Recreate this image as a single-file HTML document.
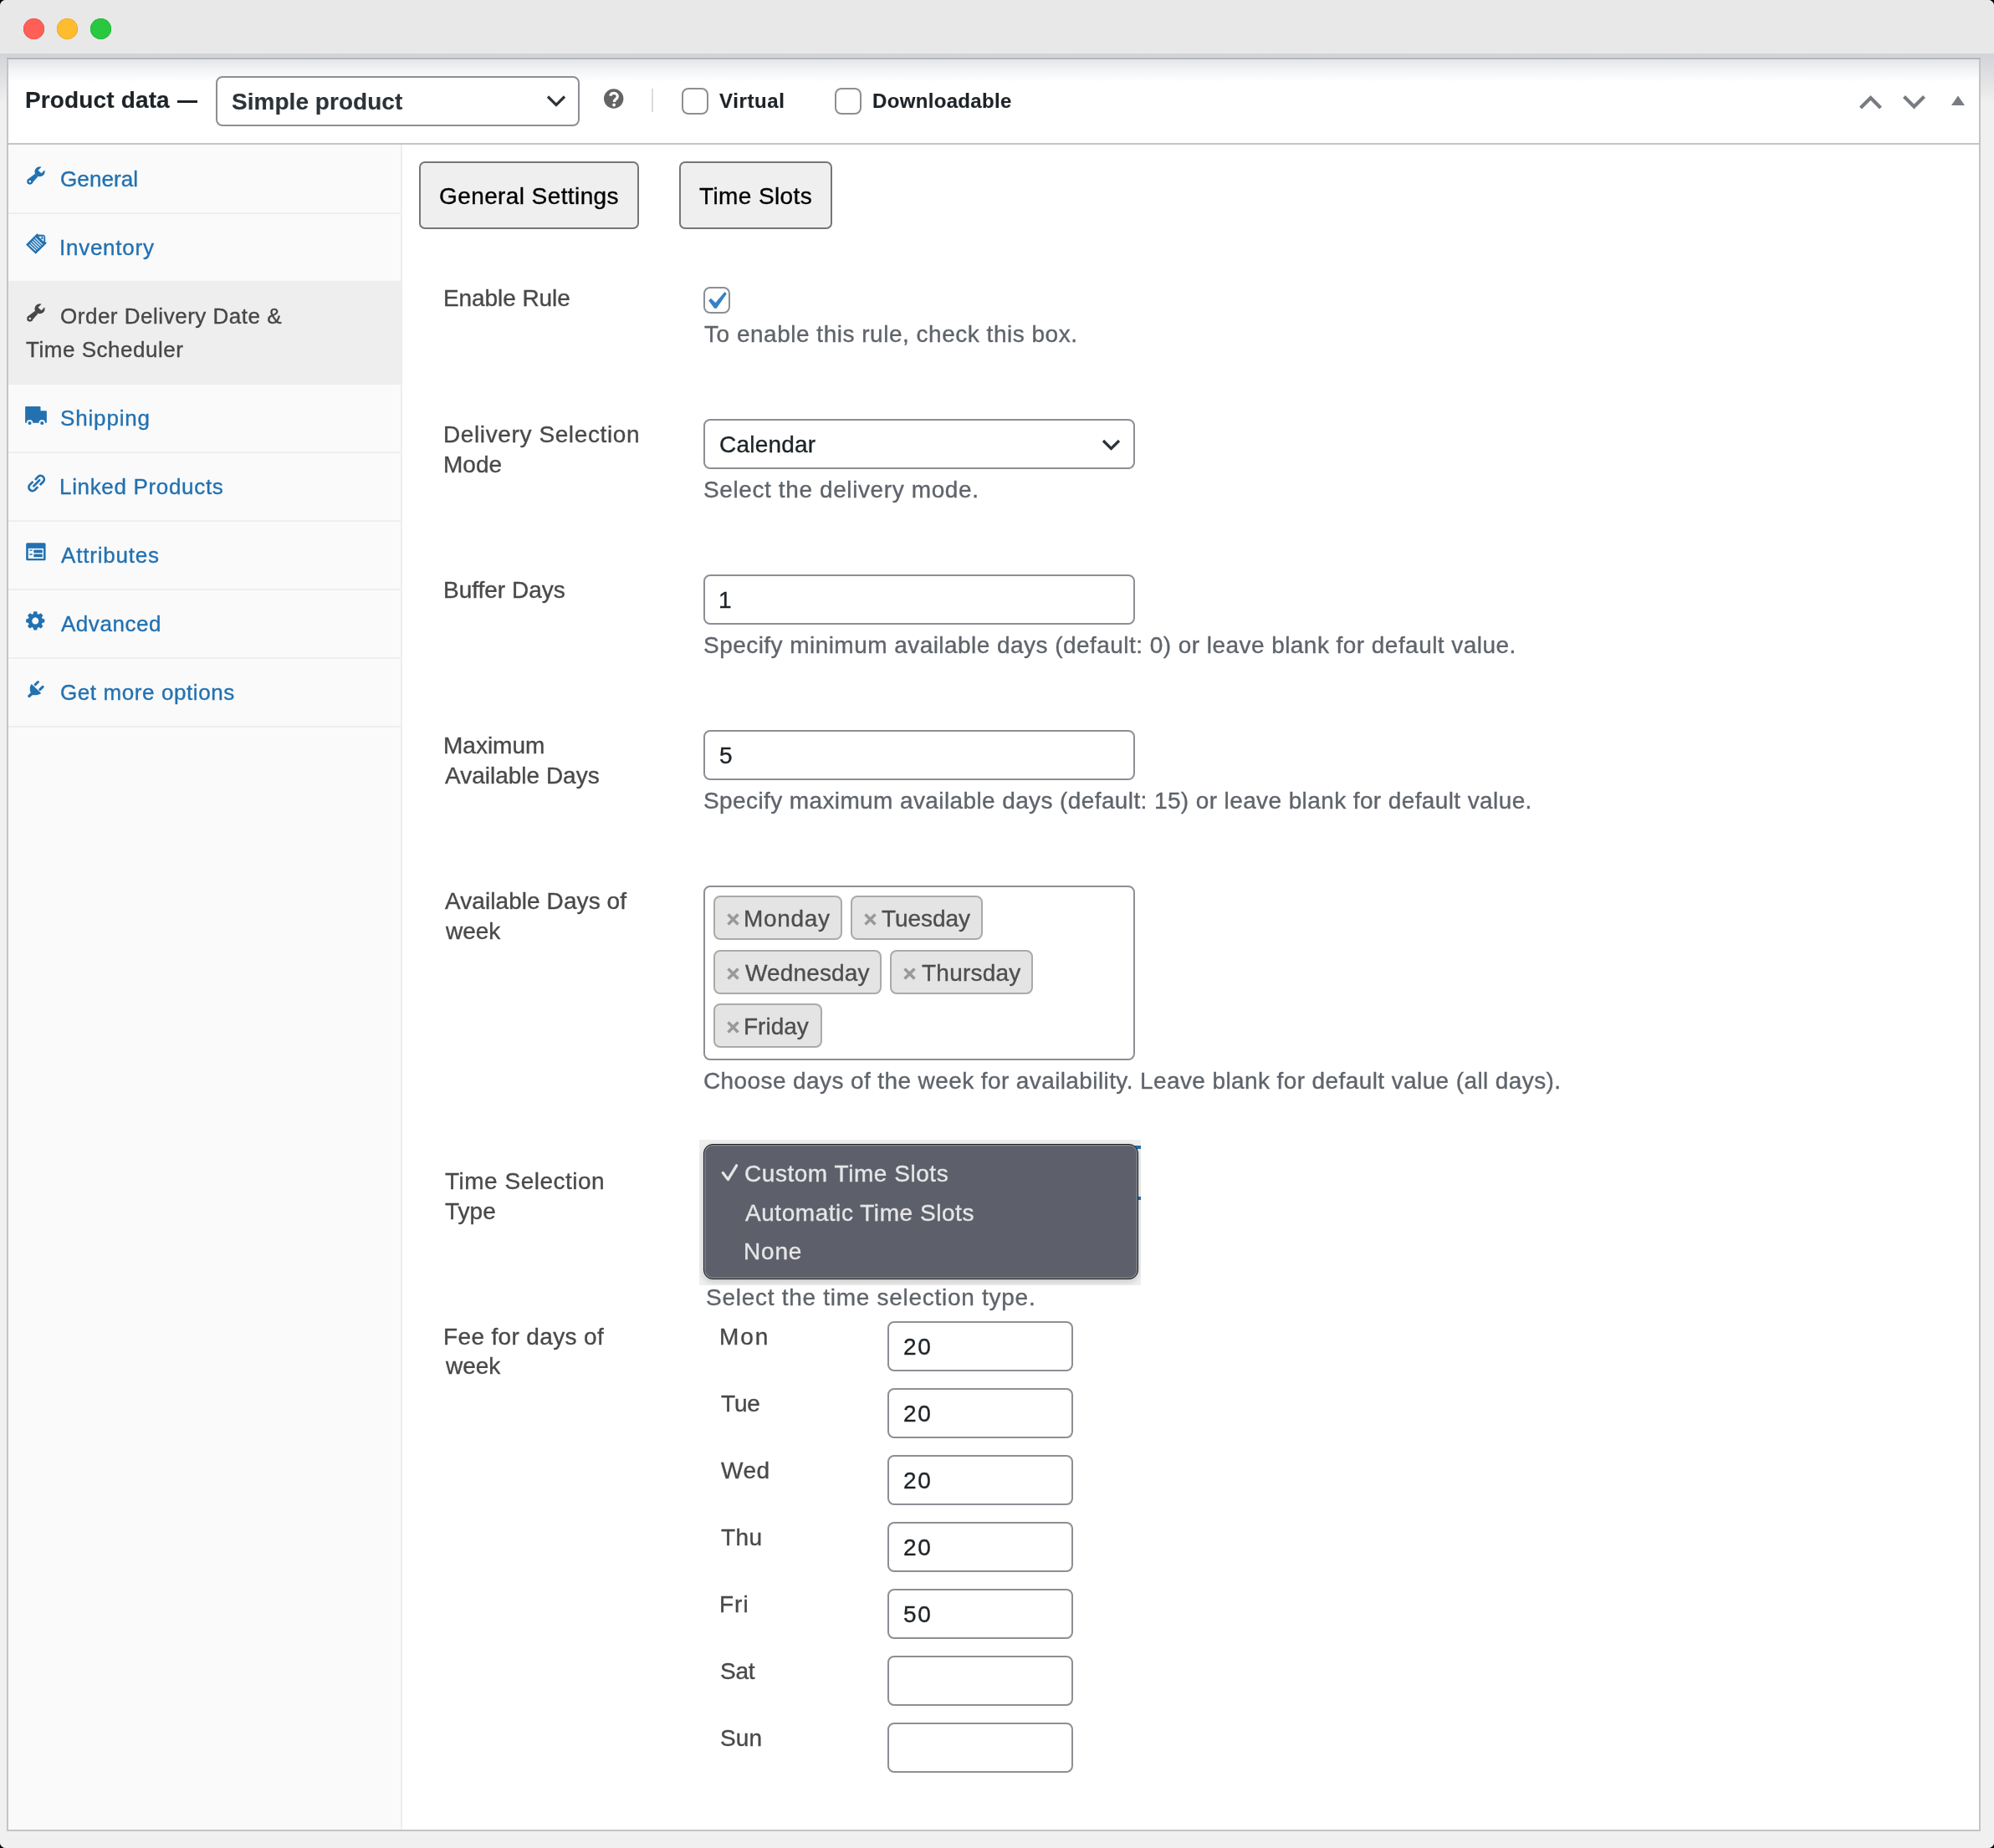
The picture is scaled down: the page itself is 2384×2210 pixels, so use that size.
<!DOCTYPE html>
<html><head><meta charset="utf-8"><style>
html,body{margin:0;padding:0;}
body{width:2384px;height:2210px;overflow:hidden;background:#000;position:relative;font-family:'Liberation Sans', sans-serif;}
#w{position:absolute;left:0;top:0;width:2384px;height:2210px;border-radius:7px;overflow:hidden;background:#f0f0f1;}
#w>div,#w>svg{position:absolute;}
#w>div{will-change:transform;}
</style></head><body><div id="w">
<div style="left:0px;top:0px;width:2384px;height:64px;background:#e8e8e8"></div>
<div style="left:27.5px;top:21.8px;width:25.3px;height:25.3px;background:#ff5f57;border-radius:50%;box-shadow:inset 0 0 0 0.6px #e2463f"></div>
<div style="left:67.5px;top:21.8px;width:25.3px;height:25.3px;background:#febc2e;border-radius:50%;box-shadow:inset 0 0 0 0.6px #e1a116"></div>
<div style="left:107.5px;top:21.8px;width:25.3px;height:25.3px;background:#28c840;border-radius:50%;box-shadow:inset 0 0 0 0.6px #14ae2b"></div>
<div style="left:0px;top:64px;width:2384px;height:2146px;background:#f0f0f1"></div>
<div style="left:0px;top:64px;width:2384px;height:7px;background:linear-gradient(#d2d3d7,#d4d5d9)"></div>
<div style="left:0px;top:64px;width:8px;height:60px;background:linear-gradient(#d2d3d7,#f0f0f1)"></div>
<div style="left:2368px;top:64px;width:16px;height:60px;background:linear-gradient(#d2d3d7,#f0f0f1)"></div>
<div style="left:8px;top:69px;width:2360px;height:2121px;background:#fff;border:2px solid #c3c4c7;box-sizing:border-box"></div>
<div style="left:8px;top:69px;width:2360px;height:2px;background:#b4b6bb"></div>
<div style="left:10px;top:71px;width:2356px;height:27px;background:linear-gradient(#e3e4e7,#f2f3f4 45%,#ffffff)"></div>
<div style="left:10px;top:171px;width:2356px;height:2px;background:#c3c4c7"></div>
<div style="left:10px;top:173px;width:471px;height:2015px;background:#fafafa"></div>
<div style="left:479px;top:173px;width:2px;height:2015px;background:#eee"></div>
<div style="left:10px;top:254px;width:469px;height:2px;background:#eee"></div>
<div style="left:10px;top:336px;width:469px;height:2px;background:#eee"></div>
<div style="left:10px;top:458px;width:469px;height:2px;background:#eee"></div>
<div style="left:10px;top:540px;width:469px;height:2px;background:#eee"></div>
<div style="left:10px;top:622px;width:469px;height:2px;background:#eee"></div>
<div style="left:10px;top:704px;width:469px;height:2px;background:#eee"></div>
<div style="left:10px;top:786px;width:469px;height:2px;background:#eee"></div>
<div style="left:10px;top:868px;width:469px;height:2px;background:#eee"></div>
<div style="left:10px;top:336px;width:471px;height:124px;background:#eee"></div>
<div style="left:212px;top:119.6px;width:23.5px;height:2.8px;background:#1d2327"></div>
<div style="left:258px;top:91px;width:435px;height:60px;border:2px solid #8c8f94;border-radius:8px;box-sizing:border-box;background:#fff"></div>
<svg style="left:652px;top:112px" width="26" height="18" viewBox="0 0 26 18"><path d="M3 3.5 L13 13.5 L23 3.5" fill="none" stroke="#2c3338" stroke-width="3.2"/></svg>
<svg style="left:721px;top:106px" width="26" height="26" viewBox="0 0 26 26"><circle cx="12.7" cy="12" r="11.7" fill="#646464"/><path d="M8.6 8.6 C9.3 6.2 11.3 5.4 13 5.4 C15.6 5.4 17.3 7.2 17.3 9.3 C17.3 11.6 15.3 12.4 14.2 13.6 C13.6 14.3 13.4 15 13.4 16" fill="none" stroke="#fff" stroke-width="3.2"/><circle cx="13.1" cy="19.5" r="1.9" fill="#fff"/></svg>
<div style="left:779px;top:106px;width:2px;height:28px;background:#dcdcde"></div>
<div style="left:815px;top:105px;width:32px;height:32px;border:2px solid #8c8f94;border-radius:8px;box-sizing:border-box;background:#fff"></div>
<div style="left:998px;top:105px;width:32px;height:32px;border:2px solid #8c8f94;border-radius:8px;box-sizing:border-box;background:#fff"></div>
<svg style="left:2218px;top:108px" width="140" height="28" viewBox="0 0 140 28"><path d="M6.5 21 L18.5 9 L30.5 21" fill="none" stroke="#787c82" stroke-width="4.2"/><path d="M58.5 7.5 L70.5 19.5 L82.5 7.5" fill="none" stroke="#787c82" stroke-width="4.2"/><path d="M115 18 L123 6.5 L131 18 Z" fill="#787c82"/></svg>
<svg style="left:26px;top:190px" width="40" height="40" viewBox="0 0 1848 1848"><g fill="#2271b1"><circle cx="995" cy="705" r="280"/><path d="M735 815 L900 965 L555 1360 L330 1135 Z"/><circle cx="450" cy="1250" r="165"/></g><path d="M1060 470 L905 640 L1085 800 L1245 640 L1500 380 L1320 200 Z" fill="#fafafa"/><circle cx="455" cy="1250" r="60" fill="#fafafa"/></svg>
<svg style="left:26px;top:354px" width="40" height="40" viewBox="0 0 1848 1848"><g fill="#474747"><circle cx="995" cy="705" r="280"/><path d="M735 815 L900 965 L555 1360 L330 1135 Z"/><circle cx="450" cy="1250" r="165"/></g><path d="M1060 470 L905 640 L1085 800 L1245 640 L1500 380 L1320 200 Z" fill="#eeeeee"/><circle cx="455" cy="1250" r="60" fill="#eeeeee"/></svg>
<svg style="left:26px;top:272px" width="40" height="40" viewBox="0 0 1848 1848"><g fill="#2271b1"><path d="M850 330 L1380 870 L770 1470 L230 950 Z"/><path d="M930 395 L1195 410 Q1290 430 1300 520 L1305 760 L1100 800 L860 470 Z"/></g><path d="M925 500 L1228 497 L1205 790 Z" fill="#fafafa"/><circle cx="1130" cy="585" r="60" fill="#2271b1"/><g stroke="#fafafa" stroke-width="52" stroke-linecap="butt"><path d="M410 940.0 L780 1290"/><path d="M495 847.5 L870 1205"/><path d="M580 755.0 L960 1120"/><path d="M665 662.5 L1050 1035"/><path d="M750 570.0 L1140 950"/></g></svg>
<svg style="left:26px;top:480px" width="40" height="40" viewBox="0 0 1848 1848"><path d="M190 320 Q190 280 230 280 L1000 280 Q1040 280 1040 320 L1040 520 L1340 520 Q1380 520 1380 560 L1380 1150 Q1380 1190 1340 1190 L1290 1190 A170 170 0 0 0 950 1190 L610 1190 A170 170 0 0 0 270 1190 L230 1190 Q190 1190 190 1150 Z" fill="#2271b1"/><circle cx="440" cy="1200" r="95" fill="#2271b1"/><circle cx="1120" cy="1200" r="95" fill="#2271b1"/></svg>
<svg style="left:26px;top:560px" width="40" height="40" viewBox="0 0 1848 1848"><g fill="none" stroke="#2271b1" stroke-width="125"><path d="M740 640 L909 459 A200 200 0 0 1 1191 741 L1005 925"/><path d="M890 1020 L721 1201 A200 200 0 0 1 439 919 L625 735"/><path d="M660 985 L980 655" stroke-linecap="round"/></g></svg>
<svg style="left:26px;top:642px" width="40" height="40" viewBox="0 0 1848 1848"><rect x="240" y="340" width="1080" height="970" rx="70" fill="#2271b1"/><rect x="360" y="640" width="840" height="560" fill="#fafafa"/><rect x="420" y="700" width="170" height="80" rx="25" fill="#2271b1" opacity="0.75"/><rect x="420" y="935" width="170" height="75" rx="25" fill="#2271b1"/><rect x="880" y="880" width="260" height="0" fill="#2271b1"/><rect x="660" y="715" width="485" height="165" rx="40" fill="#2271b1"/><rect x="660" y="960" width="485" height="165" rx="40" fill="#2271b1"/><rect x="660" y="880" width="485" height="80" fill="#2271b1" opacity="0.25"/></svg>
<svg style="left:26px;top:724px" width="40" height="40" viewBox="0 0 1848 1848"><path d="M632 468 L662 337 L838 337 L868 468 L937 496 L1050 425 L1175 550 L1104 663 L1132 732 L1263 762 L1263 938 L1132 968 L1104 1037 L1175 1150 L1050 1275 L937 1204 L868 1232 L838 1363 L662 1363 L632 1232 L563 1204 L450 1275 L325 1150 L396 1037 L368 968 L237 938 L237 762 L368 732 L396 663 L325 550 L450 425 L563 496Z M935 850 A185 185 0 1 0 935 851 Z" fill="#2271b1" fill-rule="evenodd"/></svg>
<svg style="left:26px;top:806px" width="40" height="40" viewBox="0 0 1848 1848"><path d="M540 560 L1070 1060 Q930 1190 570 1165 Q440 1000 450 760 Q470 640 540 560 Z" fill="#2271b1"/><path d="M520 1120 L410 1220" stroke="#2271b1" stroke-width="160" stroke-linecap="round"/><path d="M745 590 L900 440" stroke="#2271b1" stroke-width="140" stroke-linecap="round"/><path d="M1005 860 L1160 710" stroke="#2271b1" stroke-width="140" stroke-linecap="round"/></svg>
<div style="left:501px;top:193px;width:263px;height:81px;background:#efefef;border:2px solid #767676;border-radius:7px;box-sizing:border-box"></div>
<div style="left:812px;top:193px;width:183px;height:81px;background:#efefef;border:2px solid #767676;border-radius:7px;box-sizing:border-box"></div>
<div style="left:841px;top:343px;width:32px;height:32px;border:2px solid #8c8f94;border-radius:8px;box-sizing:border-box;background:#fff"></div>
<svg style="left:836px;top:338px" width="44" height="44" viewBox="0 0 1848 1848"><path d="M470 900 L580 790 L815 1010 L1280 460 L1380 560 L870 1290 L760 1290 Z" fill="#3582c4"/></svg>
<div style="left:841px;top:501px;width:516px;height:60px;border:2px solid #8c8f94;border-radius:8px;box-sizing:border-box;background:#fff"></div>
<svg style="left:1315px;top:522px" width="28" height="20" viewBox="0 0 28 20"><path d="M4 5 L13.5 14.5 L23 5" fill="none" stroke="#2c3338" stroke-width="3.2"/></svg>
<div style="left:841px;top:687px;width:516px;height:60px;border:2px solid #8c8f94;border-radius:8px;box-sizing:border-box;background:#fff"></div>
<div style="left:841px;top:873px;width:516px;height:60px;border:2px solid #8c8f94;border-radius:8px;box-sizing:border-box;background:#fff"></div>
<div style="left:841px;top:1059px;width:516px;height:209px;border:2px solid #8c8f94;border-radius:8px;box-sizing:border-box;background:#fff"></div>
<div style="left:853px;top:1071px;width:154px;height:53px;background:#e4e4e4;border:2px solid #aaa;border-radius:8px;box-sizing:border-box"></div>
<svg style="left:869px;top:1092px" width="15" height="15" viewBox="0 0 15 15"><path d="M1.5 1.5 L13.5 13.5 M13.5 1.5 L1.5 13.5" stroke="#999" stroke-width="3.5"/></svg>
<div style="left:1017px;top:1071px;width:158px;height:53px;background:#e4e4e4;border:2px solid #aaa;border-radius:8px;box-sizing:border-box"></div>
<svg style="left:1033px;top:1092px" width="15" height="15" viewBox="0 0 15 15"><path d="M1.5 1.5 L13.5 13.5 M13.5 1.5 L1.5 13.5" stroke="#999" stroke-width="3.5"/></svg>
<div style="left:853px;top:1136px;width:201px;height:53px;background:#e4e4e4;border:2px solid #aaa;border-radius:8px;box-sizing:border-box"></div>
<svg style="left:869px;top:1157px" width="15" height="15" viewBox="0 0 15 15"><path d="M1.5 1.5 L13.5 13.5 M13.5 1.5 L1.5 13.5" stroke="#999" stroke-width="3.5"/></svg>
<div style="left:1064px;top:1136px;width:171px;height:53px;background:#e4e4e4;border:2px solid #aaa;border-radius:8px;box-sizing:border-box"></div>
<svg style="left:1080px;top:1157px" width="15" height="15" viewBox="0 0 15 15"><path d="M1.5 1.5 L13.5 13.5 M13.5 1.5 L1.5 13.5" stroke="#999" stroke-width="3.5"/></svg>
<div style="left:853px;top:1200px;width:130px;height:53px;background:#e4e4e4;border:2px solid #aaa;border-radius:8px;box-sizing:border-box"></div>
<svg style="left:869px;top:1221px" width="15" height="15" viewBox="0 0 15 15"><path d="M1.5 1.5 L13.5 13.5 M13.5 1.5 L1.5 13.5" stroke="#999" stroke-width="3.5"/></svg>
<div style="left:836px;top:1363px;width:528px;height:174px;overflow:hidden;background:#efefef"><div style="position:absolute;left:514px;top:7px;width:14px;height:4px;background:#2271b1"></div><div style="position:absolute;left:524px;top:68px;width:4px;height:4px;background:#2271b1"></div><div style="position:absolute;left:5px;top:5px;width:520px;height:162px;background:#5d606a;border:1.5px solid #1f2023;border-radius:11px;box-sizing:border-box;box-shadow:inset 0 0 0 1.5px #80838b,0 3px 7px rgba(0,0,0,0.16)"></div></div>
<svg style="left:860px;top:1390px" width="24" height="24" viewBox="0 0 24 24"><path d="M4.3 12.5 L10.4 20.6 L20.6 3.8" fill="none" stroke="#e6e6e8" stroke-width="3.2" stroke-linecap="round" stroke-linejoin="round"/></svg>
<div style="left:1061px;top:1580px;width:222px;height:60px;border:2px solid #8c8f94;border-radius:8px;box-sizing:border-box;background:#fff"></div>
<div style="left:1061px;top:1660px;width:222px;height:60px;border:2px solid #8c8f94;border-radius:8px;box-sizing:border-box;background:#fff"></div>
<div style="left:1061px;top:1740px;width:222px;height:60px;border:2px solid #8c8f94;border-radius:8px;box-sizing:border-box;background:#fff"></div>
<div style="left:1061px;top:1820px;width:222px;height:60px;border:2px solid #8c8f94;border-radius:8px;box-sizing:border-box;background:#fff"></div>
<div style="left:1061px;top:1900px;width:222px;height:60px;border:2px solid #8c8f94;border-radius:8px;box-sizing:border-box;background:#fff"></div>
<div style="left:1061px;top:1980px;width:222px;height:60px;border:2px solid #8c8f94;border-radius:8px;box-sizing:border-box;background:#fff"></div>
<div style="left:1061px;top:2060px;width:222px;height:60px;border:2px solid #8c8f94;border-radius:8px;box-sizing:border-box;background:#fff"></div>
<div style="left:30.00px;top:106.20px;font:bold 28px/28px 'Liberation Sans', sans-serif;color:#1d2327;letter-spacing:0.140px;white-space:pre;-webkit-text-stroke:0.15px #1d2327">Product data</div>
<div style="left:276.50px;top:107.50px;font:bold 28px/28px 'Liberation Sans', sans-serif;color:#2c3338;letter-spacing:0.033px;white-space:pre;-webkit-text-stroke:0.15px #2c3338">Simple product</div>
<div style="left:860.30px;top:109.28px;font:bold 24px/24px 'Liberation Sans', sans-serif;color:#1d2327;letter-spacing:0.603px;white-space:pre;-webkit-text-stroke:0.15px #1d2327">Virtual</div>
<div style="left:1042.70px;top:109.28px;font:bold 24px/24px 'Liberation Sans', sans-serif;color:#1d2327;letter-spacing:0.333px;white-space:pre;-webkit-text-stroke:0.15px #1d2327">Downloadable</div>
<div style="left:72.40px;top:201.39px;font:normal 26px/26px 'Liberation Sans', sans-serif;color:#2271b1;letter-spacing:0.096px;white-space:pre;-webkit-text-stroke:0.35px #2271b1">General</div>
<div style="left:71.40px;top:283.39px;font:normal 26px/26px 'Liberation Sans', sans-serif;color:#2271b1;letter-spacing:0.744px;white-space:pre;-webkit-text-stroke:0.35px #2271b1">Inventory</div>
<div style="left:71.70px;top:365.39px;font:normal 26px/26px 'Liberation Sans', sans-serif;color:#474747;letter-spacing:0.517px;white-space:pre;-webkit-text-stroke:0.35px #474747">Order Delivery Date &amp;</div>
<div style="left:30.60px;top:405.39px;font:normal 26px/26px 'Liberation Sans', sans-serif;color:#474747;letter-spacing:0.527px;white-space:pre;-webkit-text-stroke:0.35px #474747">Time Scheduler</div>
<div style="left:71.70px;top:487.39px;font:normal 26px/26px 'Liberation Sans', sans-serif;color:#2271b1;letter-spacing:0.838px;white-space:pre;-webkit-text-stroke:0.35px #2271b1">Shipping</div>
<div style="left:70.70px;top:569.39px;font:normal 26px/26px 'Liberation Sans', sans-serif;color:#2271b1;letter-spacing:0.668px;white-space:pre;-webkit-text-stroke:0.35px #2271b1">Linked Products</div>
<div style="left:72.70px;top:651.39px;font:normal 26px/26px 'Liberation Sans', sans-serif;color:#2271b1;letter-spacing:0.808px;white-space:pre;-webkit-text-stroke:0.35px #2271b1">Attributes</div>
<div style="left:72.70px;top:733.39px;font:normal 26px/26px 'Liberation Sans', sans-serif;color:#2271b1;letter-spacing:0.531px;white-space:pre;-webkit-text-stroke:0.35px #2271b1">Advanced</div>
<div style="left:71.70px;top:815.39px;font:normal 26px/26px 'Liberation Sans', sans-serif;color:#2271b1;letter-spacing:0.591px;white-space:pre;-webkit-text-stroke:0.35px #2271b1">Get more options</div>
<div style="left:525.40px;top:220.60px;font:normal 28px/28px 'Liberation Sans', sans-serif;color:#000;letter-spacing:0.402px;white-space:pre;-webkit-text-stroke:0.35px #000">General Settings</div>
<div style="left:836.00px;top:220.60px;font:normal 28px/28px 'Liberation Sans', sans-serif;color:#000;letter-spacing:0.388px;white-space:pre;-webkit-text-stroke:0.35px #000">Time Slots</div>
<div style="left:530.40px;top:342.50px;font:normal 28px/28px 'Liberation Sans', sans-serif;color:#494949;letter-spacing:-0.078px;white-space:pre;-webkit-text-stroke:0.35px #494949">Enable Rule</div>
<div style="left:842.00px;top:385.60px;font:normal 28px/28px 'Liberation Sans', sans-serif;color:#5f646b;letter-spacing:0.513px;white-space:pre;-webkit-text-stroke:0.35px #5f646b">To enable this rule, check this box.</div>
<div style="left:530.00px;top:506.10px;font:normal 28px/28px 'Liberation Sans', sans-serif;color:#494949;letter-spacing:0.610px;white-space:pre;-webkit-text-stroke:0.35px #494949">Delivery Selection</div>
<div style="left:530.00px;top:541.70px;font:normal 28px/28px 'Liberation Sans', sans-serif;color:#494949;letter-spacing:0.000px;white-space:pre;-webkit-text-stroke:0.35px #494949">Mode</div>
<div style="left:859.70px;top:518.20px;font:normal 28px/28px 'Liberation Sans', sans-serif;color:#1d2327;letter-spacing:0.214px;white-space:pre;-webkit-text-stroke:0.35px #1d2327">Calendar</div>
<div style="left:841.00px;top:572.40px;font:normal 28px/28px 'Liberation Sans', sans-serif;color:#5f646b;letter-spacing:0.608px;white-space:pre;-webkit-text-stroke:0.35px #5f646b">Select the delivery mode.</div>
<div style="left:530.00px;top:691.70px;font:normal 28px/28px 'Liberation Sans', sans-serif;color:#494949;letter-spacing:0.000px;white-space:pre;-webkit-text-stroke:0.35px #494949">Buffer Days</div>
<div style="left:858.70px;top:703.70px;font:normal 28px/28px 'Liberation Sans', sans-serif;color:#1d2327;letter-spacing:0.000px;white-space:pre;-webkit-text-stroke:0.35px #1d2327">1</div>
<div style="left:841.00px;top:757.80px;font:normal 28px/28px 'Liberation Sans', sans-serif;color:#5f646b;letter-spacing:0.452px;white-space:pre;-webkit-text-stroke:0.35px #5f646b">Specify minimum available days (default: 0) or leave blank for default value.</div>
<div style="left:530.00px;top:877.90px;font:normal 28px/28px 'Liberation Sans', sans-serif;color:#494949;letter-spacing:0.000px;white-space:pre;-webkit-text-stroke:0.35px #494949">Maximum</div>
<div style="left:532.00px;top:913.60px;font:normal 28px/28px 'Liberation Sans', sans-serif;color:#494949;letter-spacing:0.000px;white-space:pre;-webkit-text-stroke:0.35px #494949">Available Days</div>
<div style="left:859.70px;top:889.70px;font:normal 28px/28px 'Liberation Sans', sans-serif;color:#1d2327;letter-spacing:0.000px;white-space:pre;-webkit-text-stroke:0.35px #1d2327">5</div>
<div style="left:841.00px;top:943.80px;font:normal 28px/28px 'Liberation Sans', sans-serif;color:#5f646b;letter-spacing:0.391px;white-space:pre;-webkit-text-stroke:0.35px #5f646b">Specify maximum available days (default: 15) or leave blank for default value.</div>
<div style="left:532.00px;top:1063.70px;font:normal 28px/28px 'Liberation Sans', sans-serif;color:#494949;letter-spacing:0.072px;white-space:pre;-webkit-text-stroke:0.35px #494949">Available Days of</div>
<div style="left:533.00px;top:1099.70px;font:normal 28px/28px 'Liberation Sans', sans-serif;color:#494949;letter-spacing:0.000px;white-space:pre;-webkit-text-stroke:0.35px #494949">week</div>
<div style="left:889.10px;top:1084.70px;font:normal 28px/28px 'Liberation Sans', sans-serif;color:#4e4e4e;letter-spacing:0.657px;white-space:pre;-webkit-text-stroke:0.35px #4e4e4e">Monday</div>
<div style="left:1054.20px;top:1084.70px;font:normal 28px/28px 'Liberation Sans', sans-serif;color:#4e4e4e;letter-spacing:-0.042px;white-space:pre;-webkit-text-stroke:0.35px #4e4e4e">Tuesday</div>
<div style="left:891.10px;top:1149.70px;font:normal 28px/28px 'Liberation Sans', sans-serif;color:#4e4e4e;letter-spacing:0.143px;white-space:pre;-webkit-text-stroke:0.35px #4e4e4e">Wednesday</div>
<div style="left:1101.80px;top:1149.70px;font:normal 28px/28px 'Liberation Sans', sans-serif;color:#4e4e4e;letter-spacing:0.226px;white-space:pre;-webkit-text-stroke:0.35px #4e4e4e">Thursday</div>
<div style="left:889.10px;top:1213.70px;font:normal 28px/28px 'Liberation Sans', sans-serif;color:#4e4e4e;letter-spacing:0.000px;white-space:pre;-webkit-text-stroke:0.35px #4e4e4e">Friday</div>
<div style="left:841.00px;top:1278.50px;font:normal 28px/28px 'Liberation Sans', sans-serif;color:#5f646b;letter-spacing:0.398px;white-space:pre;-webkit-text-stroke:0.35px #5f646b">Choose days of the week for availability. Leave blank for default value (all days).</div>
<div style="left:532.40px;top:1398.50px;font:normal 28px/28px 'Liberation Sans', sans-serif;color:#494949;letter-spacing:0.502px;white-space:pre;-webkit-text-stroke:0.35px #494949">Time Selection</div>
<div style="left:532.40px;top:1434.60px;font:normal 28px/28px 'Liberation Sans', sans-serif;color:#494949;letter-spacing:0.000px;white-space:pre;-webkit-text-stroke:0.35px #494949">Type</div>
<div style="left:890.20px;top:1390.40px;font:normal 28px/28px 'Liberation Sans', sans-serif;color:#e6e6e8;letter-spacing:0.546px;white-space:pre;-webkit-text-stroke:0.35px #e6e6e8">Custom Time Slots</div>
<div style="left:891.20px;top:1437.10px;font:normal 28px/28px 'Liberation Sans', sans-serif;color:#e6e6e8;letter-spacing:0.548px;white-space:pre;-webkit-text-stroke:0.35px #e6e6e8">Automatic Time Slots</div>
<div style="left:889.20px;top:1483.10px;font:normal 28px/28px 'Liberation Sans', sans-serif;color:#e6e6e8;letter-spacing:0.812px;white-space:pre;-webkit-text-stroke:0.35px #e6e6e8">None</div>
<div style="left:843.50px;top:1538.10px;font:normal 28px/28px 'Liberation Sans', sans-serif;color:#5f646b;letter-spacing:0.724px;white-space:pre;-webkit-text-stroke:0.35px #5f646b">Select the time selection type.</div>
<div style="left:530.20px;top:1585.00px;font:normal 28px/28px 'Liberation Sans', sans-serif;color:#494949;letter-spacing:0.359px;white-space:pre;-webkit-text-stroke:0.35px #494949">Fee for days of</div>
<div style="left:533.20px;top:1620.40px;font:normal 28px/28px 'Liberation Sans', sans-serif;color:#494949;letter-spacing:0.000px;white-space:pre;-webkit-text-stroke:0.35px #494949">week</div>
<div style="left:860.20px;top:1585.00px;font:normal 28px/28px 'Liberation Sans', sans-serif;color:#494949;letter-spacing:1.952px;white-space:pre;-webkit-text-stroke:0.35px #494949">Mon</div>
<div style="left:1079.70px;top:1596.90px;font:normal 28px/28px 'Liberation Sans', sans-serif;color:#1d2327;letter-spacing:1.728px;white-space:pre;-webkit-text-stroke:0.35px #1d2327">20</div>
<div style="left:862.20px;top:1665.00px;font:normal 28px/28px 'Liberation Sans', sans-serif;color:#494949;letter-spacing:-0.168px;white-space:pre;-webkit-text-stroke:0.35px #494949">Tue</div>
<div style="left:1079.70px;top:1676.90px;font:normal 28px/28px 'Liberation Sans', sans-serif;color:#1d2327;letter-spacing:1.728px;white-space:pre;-webkit-text-stroke:0.35px #1d2327">20</div>
<div style="left:862.20px;top:1745.00px;font:normal 28px/28px 'Liberation Sans', sans-serif;color:#494949;letter-spacing:0.553px;white-space:pre;-webkit-text-stroke:0.35px #494949">Wed</div>
<div style="left:1079.70px;top:1756.90px;font:normal 28px/28px 'Liberation Sans', sans-serif;color:#1d2327;letter-spacing:1.728px;white-space:pre;-webkit-text-stroke:0.35px #1d2327">20</div>
<div style="left:862.20px;top:1825.00px;font:normal 28px/28px 'Liberation Sans', sans-serif;color:#494949;letter-spacing:0.462px;white-space:pre;-webkit-text-stroke:0.35px #494949">Thu</div>
<div style="left:1079.70px;top:1836.90px;font:normal 28px/28px 'Liberation Sans', sans-serif;color:#1d2327;letter-spacing:1.728px;white-space:pre;-webkit-text-stroke:0.35px #1d2327">20</div>
<div style="left:860.20px;top:1905.00px;font:normal 28px/28px 'Liberation Sans', sans-serif;color:#494949;letter-spacing:0.986px;white-space:pre;-webkit-text-stroke:0.35px #494949">Fri</div>
<div style="left:1079.70px;top:1916.90px;font:normal 28px/28px 'Liberation Sans', sans-serif;color:#1d2327;letter-spacing:1.728px;white-space:pre;-webkit-text-stroke:0.35px #1d2327">50</div>
<div style="left:861.20px;top:1985.00px;font:normal 28px/28px 'Liberation Sans', sans-serif;color:#494949;letter-spacing:-0.224px;white-space:pre;-webkit-text-stroke:0.35px #494949">Sat</div>
<div style="left:861.20px;top:2065.00px;font:normal 28px/28px 'Liberation Sans', sans-serif;color:#494949;letter-spacing:0.176px;white-space:pre;-webkit-text-stroke:0.35px #494949">Sun</div>
</div></body></html>
